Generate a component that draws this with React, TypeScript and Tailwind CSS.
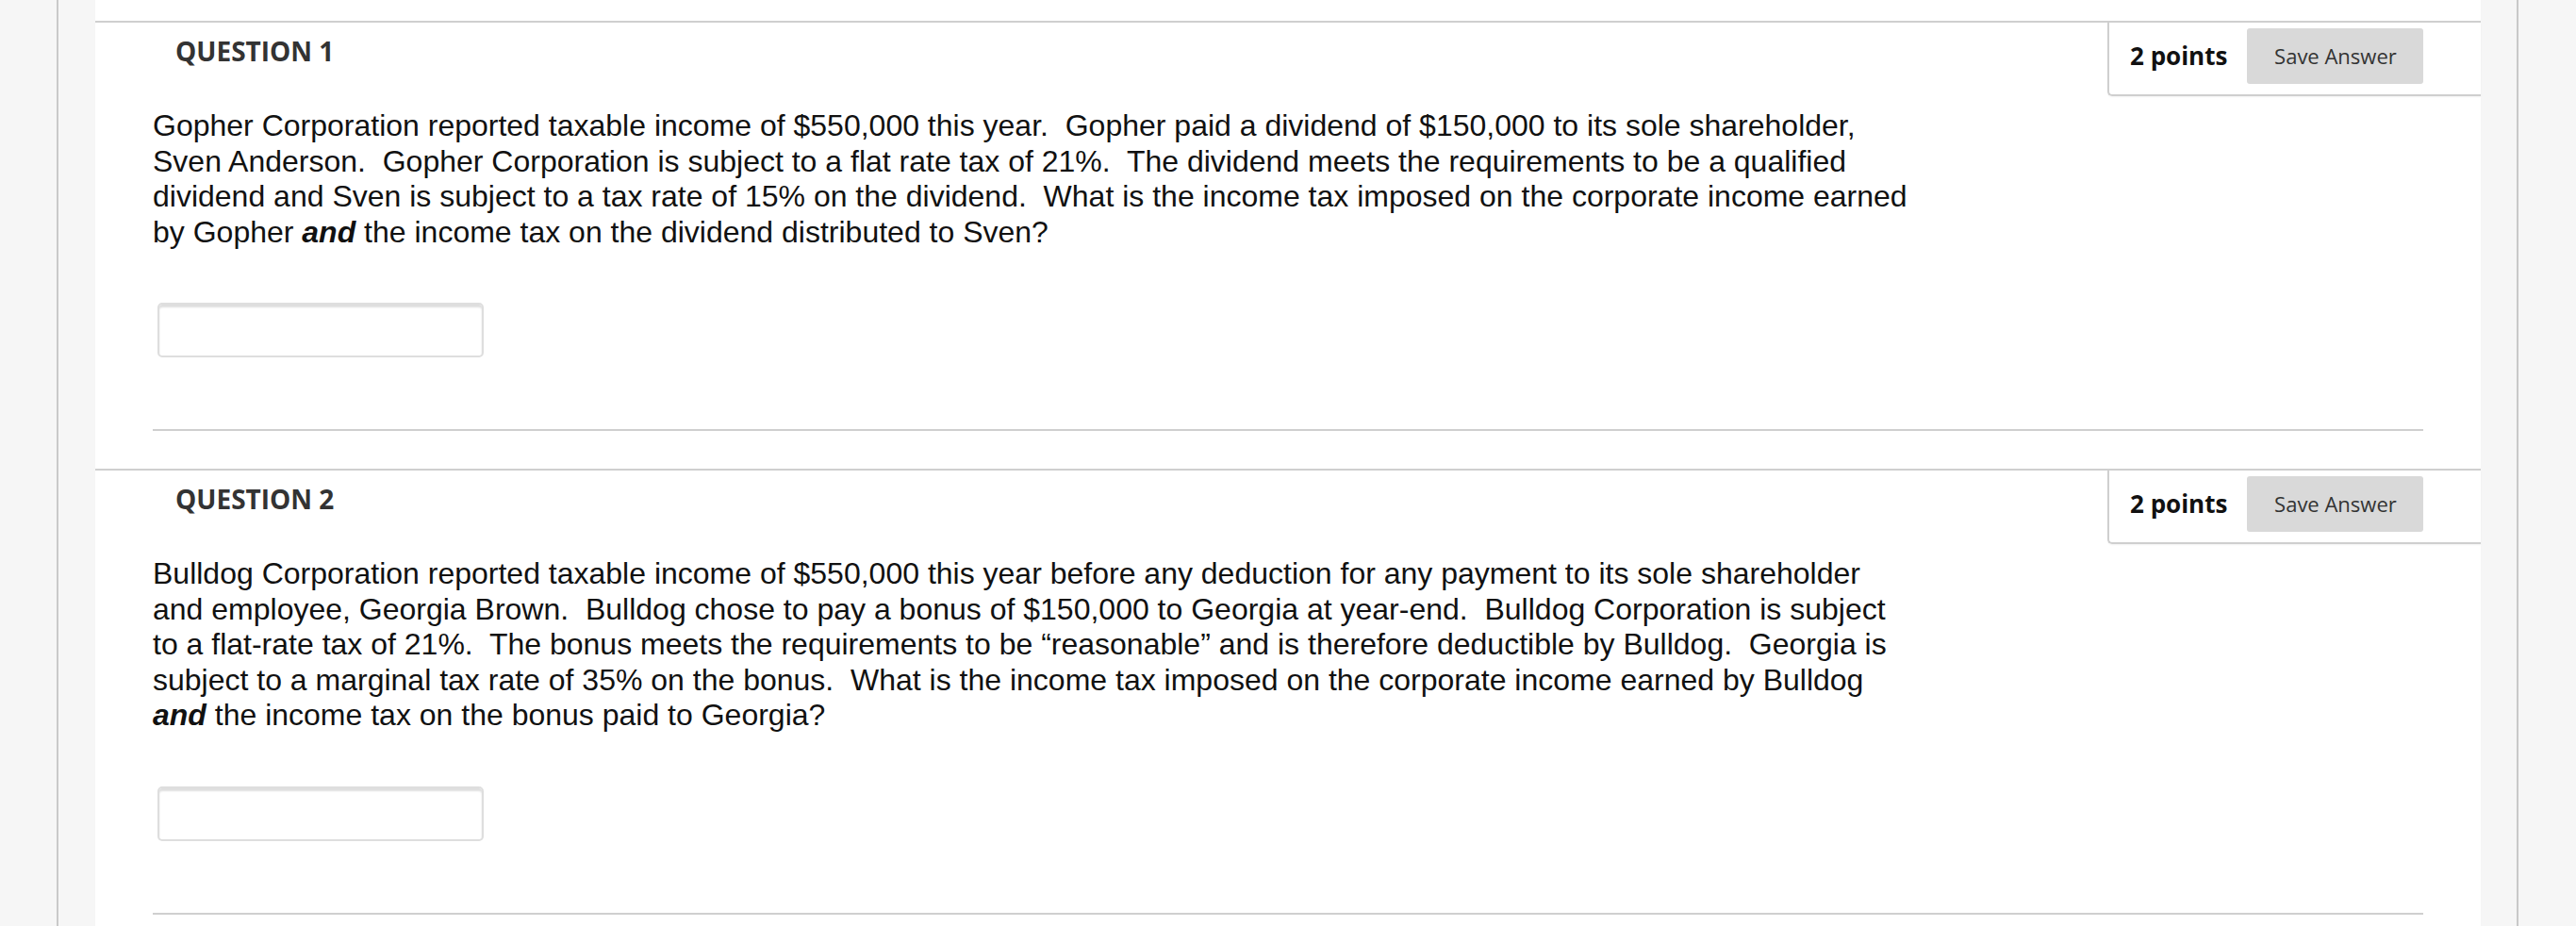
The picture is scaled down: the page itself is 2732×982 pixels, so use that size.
import type { ReactNode } from "react";

interface QuestionProps {
  number: number;
  points: number;
  children: ReactNode;
}

function Question({ number, points, children }: QuestionProps) {
  return (
    <section className="border-t-2 border-[#cfcfcf]">
      <div className="flex items-start justify-between">
        <h3 className="pl-[85px] pt-[11px] font-['Open_Sans',sans-serif] text-[28px] leading-[38px] font-bold text-[#333]">
          QUESTION {number}
        </h3>
        <div className="h-[78px] w-[396px] rounded-bl-[5px] border-b-2 border-l-2 border-[#cfcfcf] pl-[22px] pt-[6px] shadow-[0_1px_2px_rgba(0,0,0,0.05)]">
          <div className="flex h-[59px] items-center gap-[21px] font-['Open_Sans',sans-serif]">
            <span className="text-[26px] font-bold text-[#111]">
              {points} points
            </span>
            <button
              type="button"
              className="h-[59px] w-[187px] rounded-[3px] bg-[#d9d9d9] text-[22px] text-[#333]"
            >
              Save Answer
            </button>
          </div>
        </div>
      </div>

      <div className="mt-[13px] max-w-[1927px] pl-[61px] font-['Liberation_Sans',Arial,sans-serif] text-[32px] leading-[37.5px] text-[#111]">
        {children}
      </div>

      <input
        type="text"
        className="mt-[56px] ml-[66px] block h-[58px] w-[346px] rounded-[5px] border-2 border-[#dedede] bg-white shadow-[inset_0_3px_2px_rgba(0,0,0,0.13)] outline-none"
      />

      <div className="mx-[61px] mt-[76px] mb-[40px] h-[2px] bg-[#cfcfcf]" />
    </section>
  );
}

export default function App() {
  return (
    <div className="flex h-[982px] w-full overflow-hidden bg-[#f6f6f6]">
      <div className="w-[60px]" />
      <div className="w-[2px] bg-[#c9c9c9]" />
      <div className="w-[39px]" />

      <main className="w-[2530px] shrink-0 bg-white pt-[22px]">
        <Question number={1} points={2}>
          Gopher Corporation reported taxable income of $550,000 this year.{"\u00a0 "}Gopher
          paid a dividend of $150,000 to its sole shareholder, Sven Anderson.{"\u00a0 "}Gopher
          Corporation is subject to a flat rate tax of 21%.{"\u00a0 "}The dividend meets the
          requirements to be a qualified dividend and Sven is subject to a tax rate of 15% on
          the dividend.{"\u00a0 "}What is the income tax imposed on the corporate income earned
          by Gopher{" "}
          <strong>
            <em>and</em>
          </strong>{" "}
          the income tax on the dividend distributed to Sven?
        </Question>

        <Question number={2} points={2}>
          Bulldog Corporation reported taxable income of $550,000 this year before any deduction
          for any payment to its sole shareholder and employee, Georgia Brown.{"\u00a0 "}Bulldog
          chose to pay a bonus of $150,000 to Georgia at year-end.{"\u00a0 "}Bulldog Corporation
          is subject to a flat-rate tax of 21%.{"\u00a0 "}The bonus meets the requirements to be
          {" \u201creasonable\u201d "}and is therefore deductible by Bulldog.{"\u00a0 "}Georgia
          is subject to a marginal tax rate of 35% on the bonus.{"\u00a0 "}What is the income tax
          imposed on the corporate income earned by Bulldog{" "}
          <strong>
            <em>and</em>
          </strong>{" "}
          the income tax on the bonus paid to Georgia?
        </Question>
      </main>

      <div className="w-[38px]" />
      <div className="w-[2px] bg-[#c9c9c9]" />
      <div className="flex-1" />
    </div>
  );
}
